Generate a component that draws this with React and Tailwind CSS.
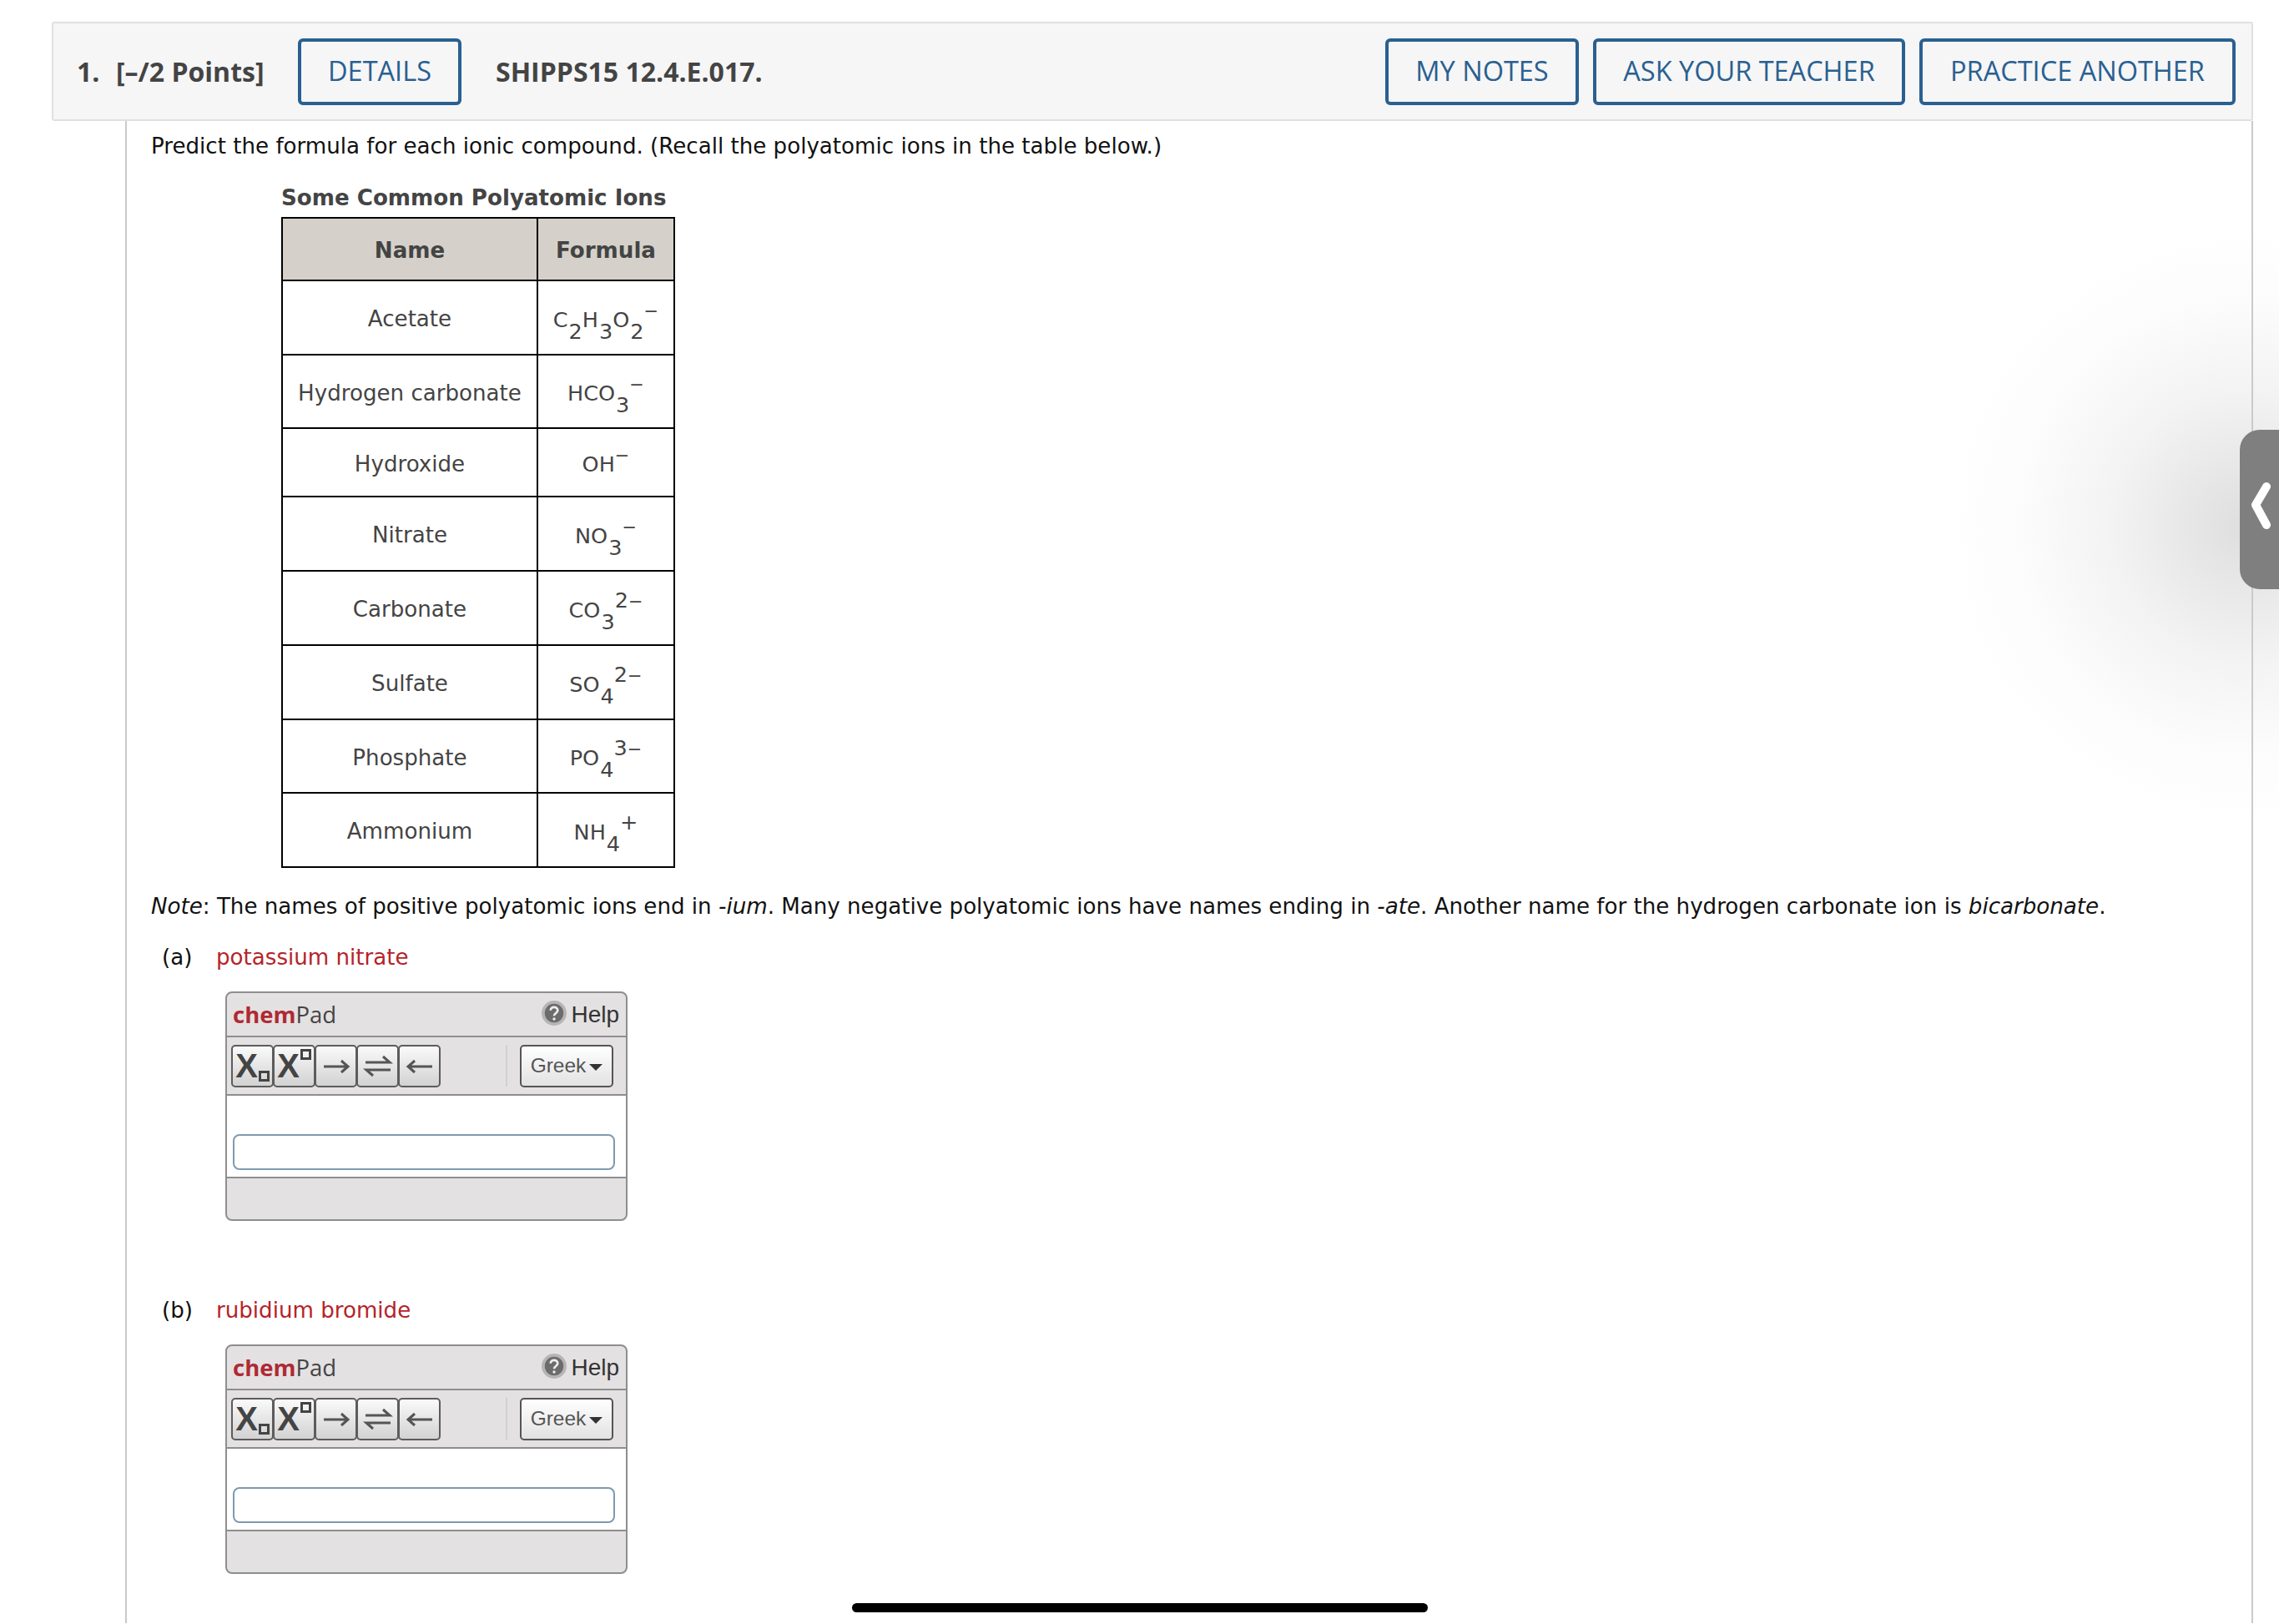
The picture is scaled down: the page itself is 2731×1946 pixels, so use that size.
const rows = [
  { name: "Acetate", h: "h-[89px]", f: [["C"], ["2", "sub"], ["H"], ["3", "sub"], ["O"], ["2", "sub"], ["−", "minus"]] },
  { name: "Hydrogen carbonate", h: "h-[88px]", f: [["HCO"], ["3", "sub"], ["−", "minus"]] },
  { name: "Hydroxide", h: "h-[82px]", f: [["OH"], ["−", "minus"]] },
  { name: "Nitrate", h: "h-[89px]", f: [["NO"], ["3", "sub"], ["−", "minus"]] },
  { name: "Carbonate", h: "h-[89px]", f: [["CO"], ["3", "sub"], ["2", "sup"], ["−", "minus"]] },
  { name: "Sulfate", h: "h-[89px]", f: [["SO"], ["4", "sub"], ["2", "sup"], ["−", "minus"]] },
  { name: "Phosphate", h: "h-[88px]", f: [["PO"], ["4", "sub"], ["3", "sup"], ["−", "minus"]] },
  { name: "Ammonium", h: "h-[89px]", f: [["NH"], ["4", "sub"], ["+", "sup"]] },
];

function Formula({ parts }) {
  return (
    <span className="mt-[4px] block h-[30px] whitespace-nowrap text-[25.5px] leading-[30px]">
      {parts.map(([text, kind], i) => {
        if (kind === "sub") return <span key={i} className="ml-px align-[-14px] leading-[0]">{text}</span>;
        if (kind === "sup") return <span key={i} className="align-[12px] leading-[0]">{text}</span>;
        if (kind === "minus") return <span key={i} className="align-[12px] text-[21px] leading-[0]">{text}</span>;
        return <span key={i}>{text}</span>;
      })}
    </span>
  );
}

function HeadButton({ children, width }) {
  return (
    <button className={`h-[80px] ${width} shrink-0 rounded-[6px] border-[4px] border-[#2a6090] text-[32.5px] font-medium text-[#2a6090]`}>
      {children}
    </button>
  );
}

function ToolButton({ children }) {
  return (
    <div className="-mr-px flex h-[51px] w-[51px] items-center justify-center rounded-[5px] border-2 border-[#5c5c5c] bg-gradient-to-b from-[#fafafa] to-[#d2d2d2]">
      {children}
    </div>
  );
}

function ArrowIcon({ type }) {
  return (
    <svg width="36" height="30" viewBox="0 0 36 30" fill="none" stroke="#555" strokeWidth="3">
      {type === "right" && <path d="M3 16H32M24 9l8 7-8 7" />}
      {type === "left" && <path d="M33 16H4M12 9l-8 7 8 7" />}
      {type === "both" && <path d="M3 11H32L24 4M33 20H4l8 7" />}
    </svg>
  );
}

function ChemPad() {
  return (
    <div className="ml-[89px] flex h-[275px] w-[482px] flex-col overflow-hidden rounded-[8px] border-2 border-[#8e8e8e] bg-[#e4e1e2] font-['Open_Sans',sans-serif]">
      <div className="flex h-[51px] shrink-0 items-center justify-between pl-[7px] pr-[8px] text-[27.5px] text-[#444]">
        <div>
          <span className="font-bold text-[#ae2a33]">chem</span>Pad
        </div>
        <div className="flex items-center gap-[4px]">
          <svg width="32" height="32" viewBox="0 0 30 30" className="-mt-[4px]">
            <circle cx="15" cy="15" r="14" fill="#b5b5b5" />
            <circle cx="15" cy="15" r="10.5" fill="#6c6c6c" />
            <path d="M11 12c0-5 8-5 8 0 0 3-4 3-4 6" fill="none" stroke="#eee" strokeWidth="2.5" />
            <circle cx="15" cy="21.5" r="1.6" fill="#eee" />
          </svg>
          <span className="font-['Liberation_Sans',sans-serif] text-[28px] text-[#333]">Help</span>
        </div>
      </div>
      <div className="flex h-[72px] shrink-0 items-center border-y-2 border-[#8e8e8e] pl-[5px] pr-[15px]">
        <ToolButton>
          <span className="flex items-end font-['Liberation_Sans',sans-serif] text-[40px] font-bold leading-none text-[#444]">
            X<span className="mb-[1px] ml-[1px] h-[13px] w-[13px] border-[3px] border-[#444]" />
          </span>
        </ToolButton>
        <ToolButton>
          <span className="flex items-start font-['Liberation_Sans',sans-serif] text-[40px] font-bold leading-none text-[#444]">
            X<span className="ml-[1px] h-[13px] w-[13px] border-[3px] border-[#444]" />
          </span>
        </ToolButton>
        <ToolButton><ArrowIcon type="right" /></ToolButton>
        <ToolButton><ArrowIcon type="both" /></ToolButton>
        <ToolButton><ArrowIcon type="left" /></ToolButton>
        <div className="ml-auto mr-[15px] h-[50px] w-[2px] bg-[#d2d0d0]" />
        <div className="flex h-[51px] w-[112px] items-center justify-center gap-[4px] rounded-[5px] border-2 border-[#555] bg-gradient-to-b from-[#ffffff] to-[#e2e2e2] font-['Liberation_Sans',sans-serif] text-[24.5px] text-[#555]">
          Greek
          <span className="mt-[3px] h-0 w-0 border-x-[8px] border-t-[8px] border-x-transparent border-t-[#333]" />
        </div>
      </div>
      <div className="flex h-[97px] shrink-0 items-end bg-white pb-[8px] pl-[7px] pr-[13px]">
        <div className="h-[43px] w-full rounded-[8px] border-2 border-[#7f9ab0] bg-white" />
      </div>
      <div className="flex-1 border-t-2 border-[#8e8e8e]" />
    </div>
  );
}

export default function App() {
  return (
    <div className="relative h-[1946px] w-full overflow-hidden bg-white pl-[62px] pr-[31px] pt-[26px] font-['DejaVu_Sans',sans-serif] text-[#111]">
      {/* shadow behind the side tab */}
      <div className="pointer-events-none absolute left-[2331px] top-[270px] h-[720px] w-[720px] bg-[radial-gradient(circle_closest-side,#dedede_0%,#f3f3f3_45%,#fcfcfc_75%,#ffffff_100%)]" />

      <div className="relative flex h-[119px] items-center rounded-[3px] border-2 border-[#e0e0e0] bg-[#f6f6f7] pl-[28px] pr-[19px] font-['Open_Sans',sans-serif] text-[32px] font-bold text-[#444]">
        <span className="w-[47px]">1.</span>
        <span className="w-[218px]">[–/2 Points]</span>
        <HeadButton width="w-[196px]">DETAILS</HeadButton>
        <span className="ml-[41px]">SHIPPS15 12.4.E.017.</span>
        <div className="ml-auto flex gap-[17px]">
          <HeadButton width="w-[232px]">MY NOTES</HeadButton>
          <HeadButton width="w-[374px]">ASK YOUR TEACHER</HeadButton>
          <HeadButton width="w-[379px]">PRACTICE ANOTHER</HeadButton>
        </div>
      </div>

      <div className="relative ml-[88px] h-[1800px] border-x-2 border-[#cacaca] pl-[29px] text-[26.12px]">
        <p className="pt-[11px] leading-[38px]">Predict the formula for each ionic compound. (Recall the polyatomic ions in the table below.)</p>

        <div className="ml-[156px] mt-[25px] w-[472px] text-[#444]">
          <div className="mb-[5px] whitespace-nowrap font-bold leading-[36px]">Some Common Polyatomic Ions</div>
          <div className="border-2 border-black">
            <div className="flex h-[73px] items-center bg-[#d5d1ca] font-bold">
              <div className="flex h-full w-[306px] items-center justify-center border-r-2 border-black pt-[4px]">Name</div>
              <div className="flex-1 pt-[4px] text-center">Formula</div>
            </div>
            {rows.map((r) => (
              <div key={r.name} className={`flex ${r.h} items-center border-t-2 border-black`}>
                <div className="flex h-full w-[306px] items-center justify-center border-r-2 border-black pt-[5px]">{r.name}</div>
                <div className="flex-1 text-center"><Formula parts={r.f} /></div>
              </div>
            ))}
          </div>
        </div>

        <p className="mt-[27px] leading-[38px]">
          <i>Note</i>: The names of positive polyatomic ions end in <i>-ium</i>. Many negative polyatomic ions have names ending in <i>-ate</i>. Another name for the hydrogen carbonate ion is <i>bicarbonate</i>.
        </p>

        <div className="mt-[23px] flex h-[38px] items-center pl-[13px] leading-[38px]">
          <span className="w-[65px]">(a)</span>
          <span className="text-[#b5242a]">potassium nitrate</span>
        </div>
        <div className="mt-[22px]"><ChemPad /></div>

        <div className="mt-[88px] flex h-[38px] items-center pl-[13px] leading-[38px]">
          <span className="w-[65px]">(b)</span>
          <span className="text-[#b5242a]">rubidium bromide</span>
        </div>
        <div className="mt-[22px]"><ChemPad /></div>
      </div>

      {/* side tab */}
      <div className="absolute left-[2684px] top-[515px] flex h-[191px] w-[47px] items-center rounded-l-[24px] bg-[#7f7f7f] pb-[8px] pl-[12px]">
        <svg width="26" height="60" viewBox="0 0 26 60" fill="none" stroke="#fff" strokeWidth="10" strokeLinecap="round" strokeLinejoin="round">
          <path d="M20 6 7 28l13 24" />
        </svg>
      </div>

      {/* home indicator */}
      <div className="absolute left-[1021px] top-[1921px] h-[11px] w-[690px] rounded-[6px] bg-black" />
    </div>
  );
}
